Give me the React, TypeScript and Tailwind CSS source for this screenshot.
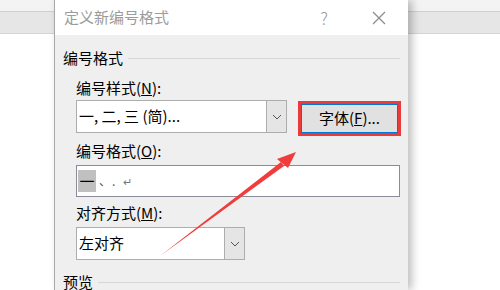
import React from 'react';

const cjk = { fontFamily: '"Noto Sans CJK SC", "Noto Sans", sans-serif' };

const Chevron: React.FC = () => (
  <svg width="10" height="6" viewBox="0 0 10 6" fill="none">
    <path d="M1 1 L5 5 L9 1" stroke="#555" strokeWidth="1" />
  </svg>
);

const BackdropColumn: React.FC<{ className?: string }> = ({ className }) => (
  <div className={`flex flex-col ${className ?? ''}`}>
    <div className="h-[12px] shrink-0 bg-[#f3f3f3] border-b border-[#cfcfcf]" />
    <div className="h-[22px] shrink-0 bg-[#e6e6e6] border-b border-[#d4d4d4]" />
    <div className="flex-1 bg-white" />
  </div>
);

const SectionHeader: React.FC<{ label: string }> = ({ label }) => (
  <div className="flex items-center h-[20px] pr-[8px]">
    <span className="text-[15px] leading-[20px] text-black">{label}</span>
    <div className="flex-1 h-px bg-[#d6d6d6] ml-[5px]" />
  </div>
);

const Select: React.FC<{ value: string; width: string }> = ({ value, width }) => (
  <div className={`flex h-[33px] border border-[#adadad] bg-white ${width}`}>
    <div className="flex-1 flex items-center pl-[2px] text-[15px] text-black">{value}</div>
    <div className="w-[20px] bg-[#e5e5e5] border-l border-[#adadad] flex items-center justify-center">
      <Chevron />
    </div>
  </div>
);

const App: React.FC = () => {
  return (
    <div className="relative w-[500px] h-[290px] overflow-hidden flex bg-white" style={cjk}>
      <BackdropColumn className="w-[54px]" />

      <div className="w-[354px] h-[290px] overflow-hidden flex flex-col border-l border-[#a8a8a8] shadow-[4px_0_8px_rgba(0,0,0,0.25)] z-10">
        {/* title bar */}
        <div className="h-[35px] shrink-0 bg-white flex items-center pl-[9px] pr-[22px] text-[#9b9b9b]">
          <span className="text-[15px]">定义新编号格式</span>
          <span className="ml-auto text-[17px] font-light">?</span>
          <svg className="ml-[44px]" width="14" height="14" viewBox="0 0 14 14">
            <path d="M1 1 L13 13 M13 1 L1 13" stroke="#8a8a8a" strokeWidth="1.2" />
          </svg>
        </div>

        {/* body */}
        <div className="flex-1 shrink-0 bg-[#efefef] pl-[8px] pt-[13px]">
          <SectionHeader label="编号格式" />

          <div className="pl-[13px] mt-[10px]">
            <div className="text-[15px] leading-[20px] text-black">
              编号样式(<span className="underline">N</span>):
            </div>
            <div className="flex items-start mt-[2px]">
              <Select value="一, 二, 三 (简)..." width="w-[211px]" />
              <div className="ml-[11px] mt-[1px] w-[103px] h-[35px] border-[3px] border-[#ea3a3a]">
                <div className="w-full h-full border border-[#0078d7] bg-[#e1e1e1] flex items-center justify-center text-[15px] text-black">
                  字体(<span className="underline">F</span>)...
                </div>
              </div>
            </div>

            <div className="text-[15px] leading-[20px] text-black mt-[5px]">
              编号格式(<span className="underline">O</span>):
            </div>
            <div className="mt-[4px] w-[324px] h-[32px] border border-[#8a8d98] bg-white flex items-center pl-[1px]">
              <span className="bg-[#c0c0c0] h-[22px] w-[18px] flex items-center justify-center text-[15px] text-black">一</span>
              <span className="text-[12px] text-[#555] ml-[3px]">、</span>
              <span className="text-[12px] text-[#555] ml-[1px]">.</span>
              <span className="text-[11px] text-[#777] ml-[8px]">↵</span>
            </div>

            <div className="text-[15px] leading-[20px] text-black mt-[6px]">
              对齐方式(<span className="underline">M</span>):
            </div>
            <div className="mt-[4px]">
              <Select value="左对齐" width="w-[169px]" />
            </div>
          </div>

          <div className="mt-[12px]">
            <SectionHeader label="预览" />
          </div>
        </div>
      </div>

      <BackdropColumn className="flex-1" />

      {/* red annotation arrow */}
      <svg className="absolute left-0 top-0 z-20 pointer-events-none" width="500" height="290">
        <polygon points="160,256 281,162 284,166" fill="#f03c3c" />
        <polygon points="296,152 277,159 288,168" fill="#f03c3c" />
      </svg>
    </div>
  );
};

export default App;
